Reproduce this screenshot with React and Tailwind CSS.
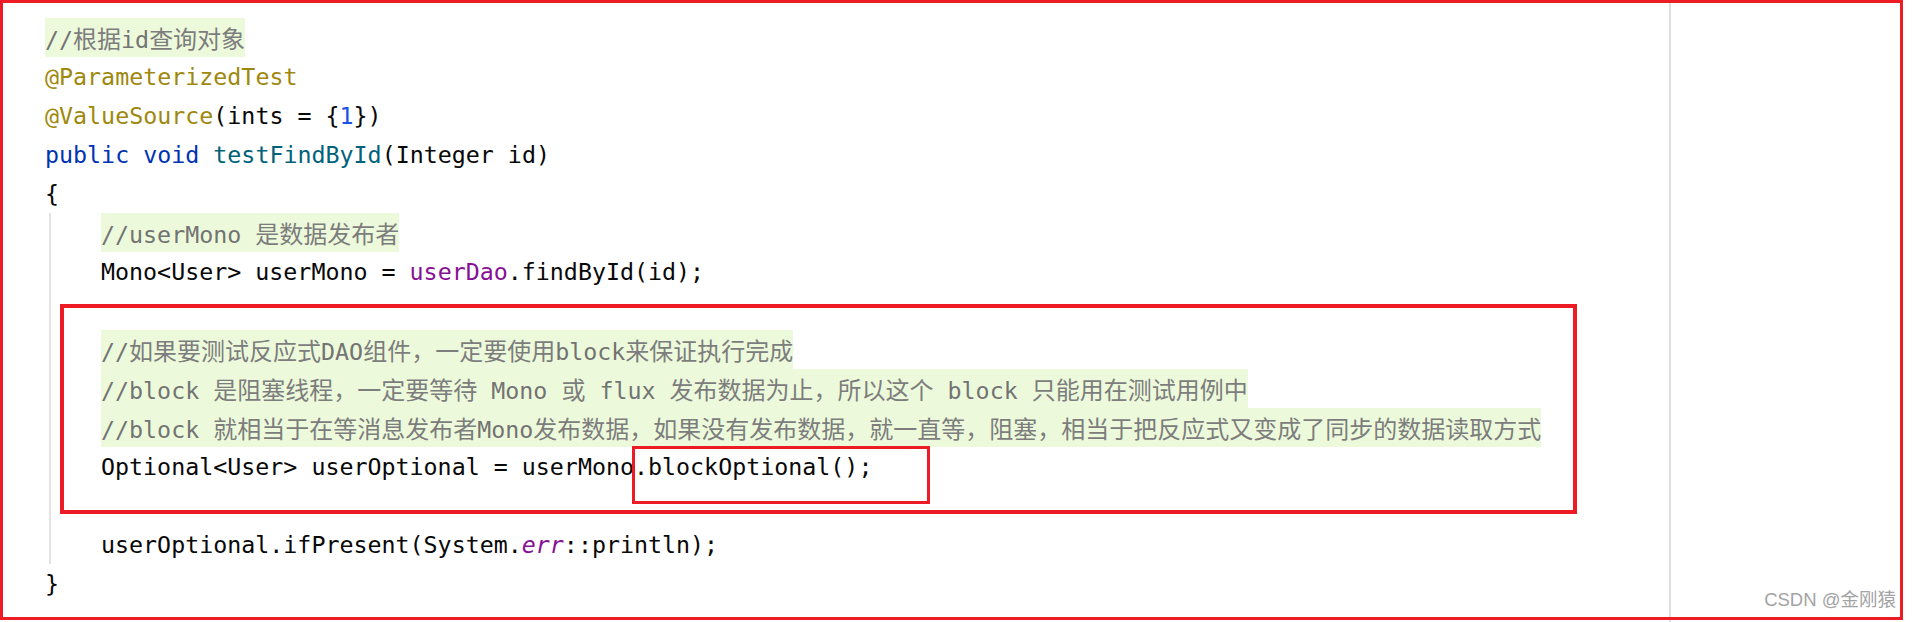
import React from "react";

// ── token colours (IntelliJ light) ─────────────────────────────────────────────
const C = {
  txt: "text-[#080808]",
  kw: "text-[#0033b3]",
  ann: "text-[#9e880d]",
  fn: "text-[#00627a]",
  num: "text-[#1750eb]",
  fld: "text-[#871094]",
  fldi: "text-[#871094] italic",
  cmt: "text-[#737373]",
};

const CJK_RE = /([\u3000-\u303f\u4e00-\u9fff\uff00-\uffef]+)/;

// CJK runs get their own font and a 24px cell, like the IDE fallback font
function Mixed({ text }) {
  return text.split(CJK_RE).map((part, i) =>
    CJK_RE.test(part) ? (
      <span key={i} className="font-['Noto_Sans_CJK_SC',sans-serif] text-[24px] text-[#7d7d7d]">
        {part}
      </span>
    ) : (
      <span key={i}>{part}</span>
    ),
  );
}

function Comment({ text }) {
  return (
    <span className={`inline-block h-[39px] align-top bg-[#ecfadb] ${C.cmt}`}>
      <Mixed text={text} />
    </span>
  );
}

function Line({ children }) {
  return <div className="h-[39px] leading-[39px] whitespace-pre">{children}</div>;
}

export default function App() {
  return (
    <div className="relative w-[1912px] h-[622px] bg-white overflow-hidden">
      <div className="flex h-full">
        {/* editor */}
        <div className="w-[1671px] h-full border-r-2 border-[#dedede] pl-[45px] pt-[18px] font-['DejaVu_Sans_Mono','Noto_Sans_CJK_SC',monospace] text-[23.3px] text-[#080808]">
          <Line>
            <Comment text="//根据id查询对象" />
          </Line>
          <Line>
            <span className={C.ann}>@ParameterizedTest</span>
          </Line>
          <Line>
            <span className={C.ann}>@ValueSource</span>(ints = {"{"}
            <span className={C.num}>1</span>
            {"})"}
          </Line>
          <Line>
            <span className={C.kw}>public void </span>
            <span className={C.fn}>testFindById</span>(Integer id)
          </Line>
          <Line>{"{"}</Line>

          <div className="ml-[4px] border-l-2 border-[#e3e3e3] pl-[50px]">
            <Line>
              <Comment text="//userMono 是数据发布者" />
            </Line>
            <Line>
              {"Mono<User> userMono = "}
              <span className={C.fld}>userDao</span>.findById(id);
            </Line>
            <Line> </Line>
            <Line>
              <Comment text="//如果要测试反应式DAO组件，一定要使用block来保证执行完成" />
            </Line>
            <Line>
              <Comment text="//block 是阻塞线程，一定要等待 Mono 或 flux 发布数据为止，所以这个 block 只能用在测试用例中" />
            </Line>
            <Line>
              <Comment text="//block 就相当于在等消息发布者Mono发布数据，如果没有发布数据，就一直等，阻塞，相当于把反应式又变成了同步的数据读取方式" />
            </Line>
            <Line>{"Optional<User> userOptional = userMono.blockOptional();"}</Line>
            <Line> </Line>
            <Line>
              userOptional.ifPresent(System.<span className={C.fldi}>err</span>::println);
            </Line>
          </div>

          <Line>{"}"}</Line>
        </div>
        <div className="flex-1" />
      </div>

      {/* red annotation frames drawn over the screenshot */}
      <div className="absolute left-0 top-0 w-[1903px] h-[620px] border-[3px] border-[#ed1c24]" />
      <div className="absolute left-[60px] top-[304px] w-[1517px] h-[210px] border-[4px] border-[#ed1c24]" />
      <div className="absolute left-[632px] top-[446px] w-[298px] h-[58px] border-[3px] border-[#ed1c24]" />

      <div className="absolute right-[16px] bottom-[8px] text-[18.5px] text-[#a3a3a3] font-['Liberation_Sans','Noto_Sans_CJK_SC',sans-serif]">
        CSDN @金刚猿
      </div>
    </div>
  );
}
